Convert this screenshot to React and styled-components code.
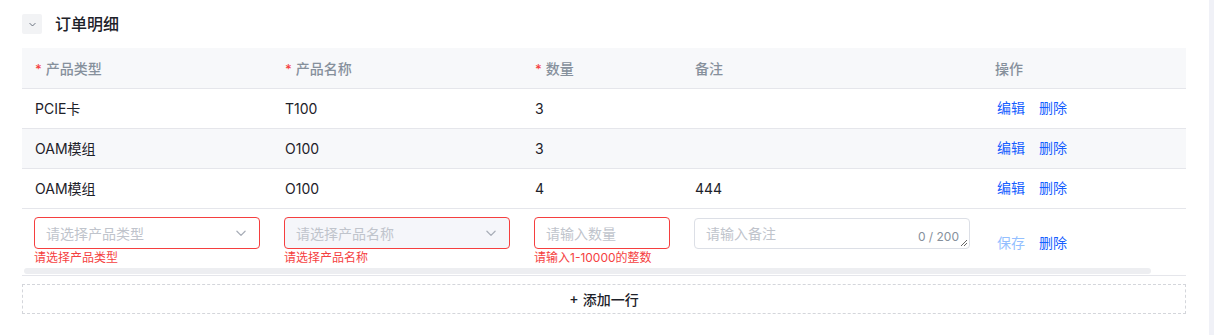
import React from "react";
import styled, { createGlobalStyle } from "styled-components";

const Global = createGlobalStyle`
  html, body { margin: 0; padding: 0; }
  body {
    background: #f0f1f7;
    font-family: Inter, "Noto Sans CJK SC", sans-serif;
    color: #1d2129;
    -webkit-font-smoothing: antialiased;
  }
  * { box-sizing: border-box; }
`;

const Page = styled.div`
  width: 1209px;
  height: 335px;
  background: #fff;
  padding: 0 23px 0 22px;
`;

const TitleBar = styled.div`
  height: 48px;
  display: flex;
  align-items: center;
  gap: 13px;
`;

const Toggle = styled.span`
  width: 20px;
  height: 20px;
  background: #f2f3f5;
  display: inline-flex;
  align-items: center;
  justify-content: center;
  border-radius: 2px;
`;

const Title = styled.h3`
  margin: 0;
  font-size: 16px;
  font-weight: 500;
  color: #1d2129;
  line-height: 24px;
`;

const TableWrap = styled.div`
  position: relative;
  border-bottom: 1px solid #e5e6eb;
`;

const Table = styled.table`
  width: 100%;
  border-collapse: collapse;
  table-layout: fixed;
  font-size: 14px;
`;

const Th = styled.th`
  height: 40px;
  background: #f7f8fa;
  color: #86909c;
  font-weight: 500;
  text-align: left;
  padding: 0 12px 0 ${(p) => (p.$pl ? p.$pl : 13)}px;
  border-bottom: 1px solid #e5e6eb;
`;

const Star = styled.span`
  color: #f53f3f;
  margin-right: 4px;
  font-size: 13px;
`;

const Tr = styled.tr`
  background: ${(p) => (p.$striped ? "#f7f8fa" : "#fff")};
`;

const Td = styled.td`
  height: 40px;
  padding: 0 12px 0 ${(p) => (p.$pl ? p.$pl : 13)}px;
  color: #1d2129;
  border-bottom: ${(p) => (p.$last ? "none" : "1px solid #e5e6eb")};
  vertical-align: middle;
`;

const EditTd = styled.td`
  padding: 8px 12px 9px ${(p) => (p.$pl ? p.$pl : 12)}px;
  vertical-align: ${(p) => (p.$middle ? "middle" : "top")};
  padding-top: ${(p) => (p.$middle ? "12px" : "8px")};
`;

const Actions = styled.div`
  display: flex;
  gap: 14px;
`;

const Link = styled.a`
  color: ${(p) => (p.$muted ? "#94bfff" : "#165dff")};
  cursor: pointer;
  font-size: 14px;
  line-height: 22px;
`;

const Field = styled.div`
  position: relative;
  height: 32px;
  border: 1px solid ${(p) => (p.$error ? "#f53f3f" : "#e5e6eb")};
  border-radius: 4px;
  background: ${(p) => (p.$disabled ? "#f5f6fa" : "#fff")};
  display: flex;
  align-items: center;
  padding: 0 11px;
  font-size: 14px;
  color: #c9cdd4;
`;

const Placeholder = styled.span`
  flex: 1;
  color: #c0c4cc;
  white-space: nowrap;
`;

const TextArea = styled.div`
  position: relative;
  height: 31px;
  margin-top: 1px;
  border: 1px solid #dcdfe6;
  border-radius: 4px;
  padding: 5px 11px;
  font-size: 14px;
  line-height: 20px;
  color: #c0c4cc;
`;

const Counter = styled.span`
  position: absolute;
  right: 10px;
  bottom: 3px;
  font-size: 12px;
  line-height: 16px;
  color: #86909c;
`;

const Resize = styled.svg`
  position: absolute;
  right: 1px;
  bottom: 1px;
`;

const ErrorText = styled.div`
  font-size: 12px;
  line-height: 17px;
  color: #f53f3f;
  white-space: nowrap;
`;

const ScrollThumb = styled.div`
  position: absolute;
  left: 2px;
  width: 1127px;
  bottom: 1px;
  height: 6px;
  border-radius: 3px;
  background: #edeef1;
`;

const AddRow = styled.button`
  margin-top: 8px;
  width: 100%;
  height: 30px;
  border: 1px dashed #d4d6db;
  background: #fff;
  font-family: inherit;
  font-size: 14px;
  font-weight: 500;
  color: #1d2129;
  display: flex;
  align-items: center;
  justify-content: center;
  cursor: pointer;
  gap: 4px;
`;

const Chevron = ({ size = 12, color = "#86909c" }) => (
  <svg width={size} height={size} viewBox="0 0 12 12" fill="none">
    <path d="M2.5 4.5 L6 8 L9.5 4.5" stroke={color} strokeWidth="1.1" strokeLinecap="round" strokeLinejoin="round" />
  </svg>
);

const rows = [
  { type: "PCIE卡", name: "T100", qty: "3", note: "" },
  { type: "OAM模组", name: "O100", qty: "3", note: "" },
  { type: "OAM模组", name: "O100", qty: "4", note: "444" },
];

export default function App() {
  return (
    <>
      <Global />
      <Page>
        <TitleBar>
          <Toggle>
            <Chevron size={9} color="#4e5969" />
          </Toggle>
          <Title>订单明细</Title>
        </TitleBar>
        <TableWrap>
          <Table>
            <colgroup>
              <col style={{ width: 250 }} />
              <col style={{ width: 250 }} />
              <col style={{ width: 160 }} />
              <col style={{ width: 300 }} />
              <col />
            </colgroup>
            <thead>
              <tr>
                <Th><Star>*</Star>产品类型</Th>
                <Th><Star>*</Star>产品名称</Th>
                <Th><Star>*</Star>数量</Th>
                <Th>备注</Th>
                <Th>操作</Th>
              </tr>
            </thead>
            <tbody>
              {rows.map((r, i) => (
                <Tr key={i} $striped={i === 1}>
                  <Td>{r.type}</Td>
                  <Td>{r.name}</Td>
                  <Td>{r.qty}</Td>
                  <Td>{r.note}</Td>
                  <Td $pl={15}>
                    <Actions>
                      <Link>编辑</Link>
                      <Link>删除</Link>
                    </Actions>
                  </Td>
                </Tr>
              ))}
              <tr>
                <EditTd>
                  <Field $error>
                    <Placeholder>请选择产品类型</Placeholder>
                    <Chevron size={14} color="#a9aeb8" />
                  </Field>
                  <ErrorText>请选择产品类型</ErrorText>
                </EditTd>
                <EditTd>
                  <Field $error $disabled>
                    <Placeholder>请选择产品名称</Placeholder>
                    <Chevron size={14} color="#a9aeb8" />
                  </Field>
                  <ErrorText>请选择产品名称</ErrorText>
                </EditTd>
                <EditTd>
                  <Field $error>
                    <Placeholder>请输入数量</Placeholder>
                  </Field>
                  <ErrorText>请输入1-10000的整数</ErrorText>
                </EditTd>
                <EditTd>
                  <TextArea>
                    请输入备注
                    <Counter>0 / 200</Counter>
                    <Resize width="8" height="8" viewBox="0 0 8 8">
                      <path d="M7 1 L1 7 M7 4 L4 7" stroke="#555" strokeWidth="0.9" />
                    </Resize>
                  </TextArea>
                </EditTd>
                <EditTd $pl={15} $middle>
                  <Actions>
                    <Link $muted>保存</Link>
                    <Link>删除</Link>
                  </Actions>
                </EditTd>
              </tr>
            </tbody>
          </Table>
          <ScrollThumb />
        </TableWrap>
        <AddRow>
          <span>+</span>
          <span>添加一行</span>
        </AddRow>
      </Page>
    </>
  );
}
